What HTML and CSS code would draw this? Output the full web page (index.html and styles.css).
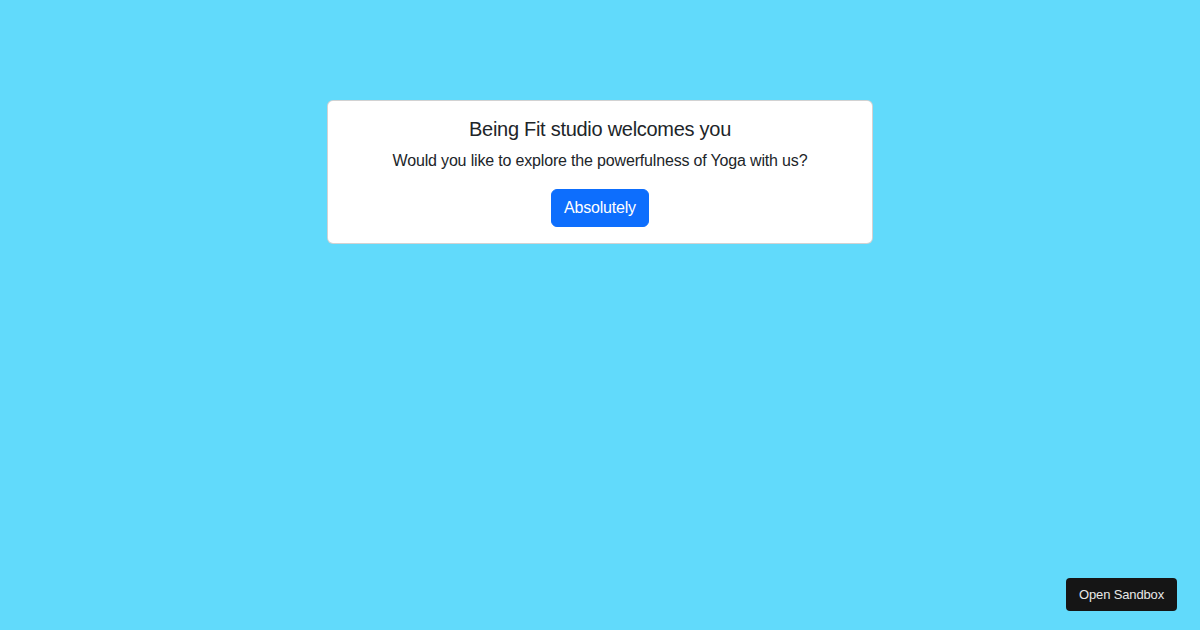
FILE: index.html
```html
<!DOCTYPE html>
<html>
<head>
<meta charset="utf-8">
<link rel="stylesheet" href="styles.css">
</head>
<body>
<div class="page">
  <div class="card">
    <div class="card-body">
      <h5 class="card-title">Being Fit studio welcomes you</h5>
      <p class="card-text">Would you like to explore the powerfulness of Yoga with us?</p>
      <button class="btn">Absolutely</button>
    </div>
  </div>
</div>
<a class="sandbox">Open Sandbox</a>
</body>
</html>
```
FILE: styles.css
```css
html, body {
  margin: 0;
  padding: 0;
  height: 100%;
}
body {
  background: #61dafb;
  font-family: "Liberation Sans", Arial, sans-serif;
  color: #212529;
}
.page {
  display: flex;
  justify-content: center;
  padding-top: 100px;
}
.card {
  width: 546px;
  box-sizing: border-box;
  background: #fff;
  border: 1px solid rgba(0,0,0,0.175);
  border-radius: 6px;
}
.card-body {
  padding: 16px;
  display: flex;
  flex-direction: column;
  align-items: center;
  text-align: center;
}
.card-title {
  margin: 0 0 8px;
  font-size: 20px;
  font-weight: 400;
  line-height: 1.2;
  letter-spacing: -0.28px;
}
.card-text {
  margin: 0 0 16px;
  font-size: 16px;
  line-height: 24px;
  letter-spacing: -0.17px;
}
.btn {
  font-family: inherit;
  font-size: 16px;
  line-height: 24px;
  letter-spacing: -0.2px;
  padding: 6px 12px;
  color: #fff;
  background: #0d6efd;
  border: 1px solid #0d6efd;
  border-radius: 6px;
  cursor: pointer;
}
.sandbox {
  position: fixed;
  right: 23px;
  bottom: 19px;
  background: #151515;
  color: #e8e8e8;
  font-size: 13px;
  line-height: 17px;
  letter-spacing: -0.15px;
  padding: 8px 13px;
  border-radius: 4px;
}
```
